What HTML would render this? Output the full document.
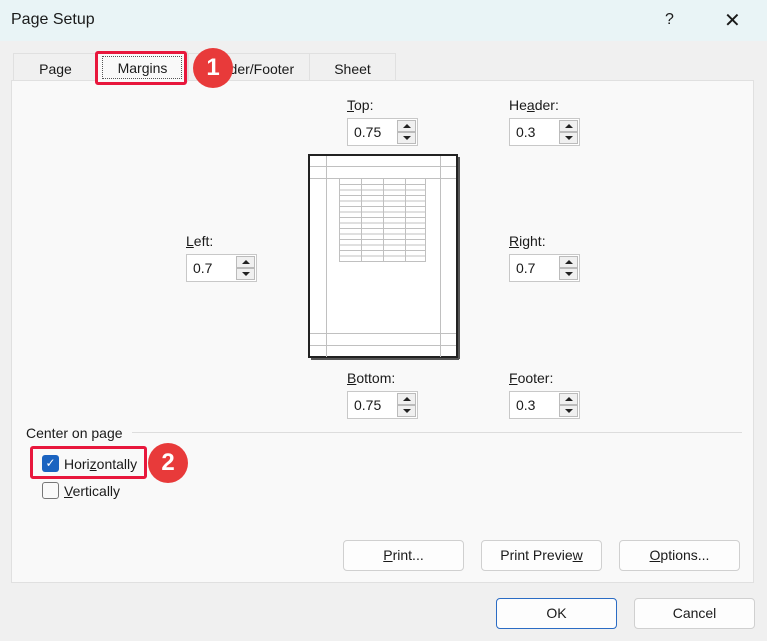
<!DOCTYPE html>
<html><head><style>
*{box-sizing:border-box;margin:0;padding:0}
body{width:767px;height:641px;background:#f0f0f0;font-family:"Liberation Sans",sans-serif;font-size:14px;color:#1a1a1a;position:relative;overflow:hidden}
.a{position:absolute}
.title{left:0;top:0;width:767px;height:41px;background:#e9f4f6}
.tab{position:absolute;top:53px;height:28px;border:1px solid #e0e0e0;border-bottom:none;background:#f0f0f0;text-align:center;line-height:30px;font-size:14px}
.panel{left:11px;top:80px;width:743px;height:503px;background:#f9f9f9;border:1px solid #e0e0e0}
.lbl{position:absolute;font-size:14px}
.spin{position:absolute;width:71px;height:28px;border:1px solid #c8c8c8;background:#fff}
.spin span{position:absolute;left:6px;top:5px;font-size:14px}
.sb{position:absolute;right:1px;width:19px;height:12px;background:#f0f0f0;border:1px solid #bbb}
.sb.u{top:1px}.sb.d{top:13px}
.sb::after{content:"";position:absolute;left:5px;border-left:4px solid transparent;border-right:4px solid transparent}
.sb.u::after{top:3px;border-bottom:4px solid #222}
.sb.d::after{top:3px;border-top:4px solid #222}
.btn{position:absolute;width:121px;height:31px;background:#fdfdfd;border:1px solid #d0d0d0;border-radius:4px;text-align:center;line-height:29px;font-size:14px}
.badge{position:absolute;width:40px;height:40px;border-radius:50%;background:#e83a3a;color:#fff;font-weight:bold;font-size:24px;text-align:center;line-height:40px}
u{text-decoration:underline}
</style></head><body>
<div class="a title"></div>
<div class="a" style="left:11px;top:11px;font-size:16px">Page Setup</div>
<div class="a" style="left:665px;top:11px;font-size:16px">?</div>
<div class="a" style="left:724px;top:8px;font-size:20px">✕</div>

<div class="tab" style="left:13px;width:85px">Page</div>
<div class="tab" style="left:188px;width:122px">Header/Footer</div>
<div class="tab" style="left:309px;width:87px">Sheet</div>
<div class="a panel"></div>
<div class="tab" style="left:97px;width:91px;top:51px;height:31px;background:#f9f9f9;border-color:#e0e0e0;line-height:32px">Margins</div>
<div class="a" style="left:102px;top:56px;width:80px;height:23px;border:1px dotted #555"></div>
<div class="a" style="left:95px;top:51px;width:92px;height:34px;border:3px solid #e8173c;border-radius:3px"></div>
<div class="badge" style="left:193px;top:48px">1</div>

<div class="lbl" style="left:347px;top:97px"><u>T</u>op:</div>
<div class="spin" style="left:347px;top:118px"><span>0.75</span><div class="sb u"></div><div class="sb d"></div></div>
<div class="lbl" style="left:509px;top:97px">He<u>a</u>der:</div>
<div class="spin" style="left:509px;top:118px"><span>0.3</span><div class="sb u"></div><div class="sb d"></div></div>
<div class="lbl" style="left:186px;top:233px"><u>L</u>eft:</div>
<div class="spin" style="left:186px;top:254px"><span>0.7</span><div class="sb u"></div><div class="sb d"></div></div>
<div class="lbl" style="left:509px;top:233px"><u>R</u>ight:</div>
<div class="spin" style="left:509px;top:254px"><span>0.7</span><div class="sb u"></div><div class="sb d"></div></div>
<div class="lbl" style="left:347px;top:370px"><u>B</u>ottom:</div>
<div class="spin" style="left:347px;top:391px"><span>0.75</span><div class="sb u"></div><div class="sb d"></div></div>
<div class="lbl" style="left:509px;top:370px"><u>F</u>ooter:</div>
<div class="spin" style="left:509px;top:391px"><span>0.3</span><div class="sb u"></div><div class="sb d"></div></div>

<svg class="a" style="left:308px;top:154px" width="152" height="206">
<rect x="1" y="1" width="148" height="202" fill="#fff" stroke="#222" stroke-width="2"/>
<line x1="151" y1="3" x2="151" y2="205" stroke="#555" stroke-width="2"/>
<line x1="3" y1="205" x2="151" y2="205" stroke="#555" stroke-width="2"/>
<g stroke="#c0c0c0" stroke-width="1">
<line x1="18.5" y1="2" x2="18.5" y2="203"/><line x1="132.5" y1="2" x2="132.5" y2="203"/>
<line x1="2" y1="12.5" x2="148" y2="12.5"/><line x1="2" y1="24.5" x2="148" y2="24.5"/>
<line x1="2" y1="179.5" x2="148" y2="179.5"/><line x1="2" y1="191.5" x2="148" y2="191.5"/>
<rect x="31.5" y="24.5" width="86" height="83" fill="none"/>
<line x1="53.5" y1="24" x2="53.5" y2="108"/><line x1="75.5" y1="24" x2="75.5" y2="108"/><line x1="97.5" y1="24" x2="97.5" y2="108"/>
<path d="M31 30.5h86M31 36h86M31 41.5h86M31 47h86M31 52.5h86M31 58h86M31 63.5h86M31 69h86M31 74.5h86M31 80h86M31 85.5h86M31 91h86M31 96.5h86M31 102h86"/>
</g></svg>

<div class="lbl" style="left:26px;top:425px">Center on page</div>
<div class="a" style="left:132px;top:432px;width:610px;height:1px;background:#ddd"></div>
<div class="a" style="left:42px;top:455px;width:17px;height:17px;background:#1a63c0;border-radius:3px;color:#fff;font-size:12px;text-align:center;line-height:17px">✓</div>
<div class="lbl" style="left:64px;top:456px">Hori<u>z</u>ontally</div>
<div class="a" style="left:30px;top:446px;width:117px;height:33px;border:3px solid #e8173c;border-radius:3px"></div>
<div class="badge" style="left:148px;top:443px">2</div>
<div class="a" style="left:42px;top:482px;width:17px;height:17px;border:1px solid #777;border-radius:3px;background:#fafafa"></div>
<div class="lbl" style="left:64px;top:483px"><u>V</u>ertically</div>

<div class="btn" style="left:343px;top:540px"><u>P</u>rint...</div>
<div class="btn" style="left:481px;top:540px">Print Previe<u>w</u></div>
<div class="btn" style="left:619px;top:540px"><u>O</u>ptions...</div>
<div class="btn" style="left:496px;top:598px;border-color:#2b6cc4">OK</div>
<div class="btn" style="left:634px;top:598px">Cancel</div>
</body></html>
